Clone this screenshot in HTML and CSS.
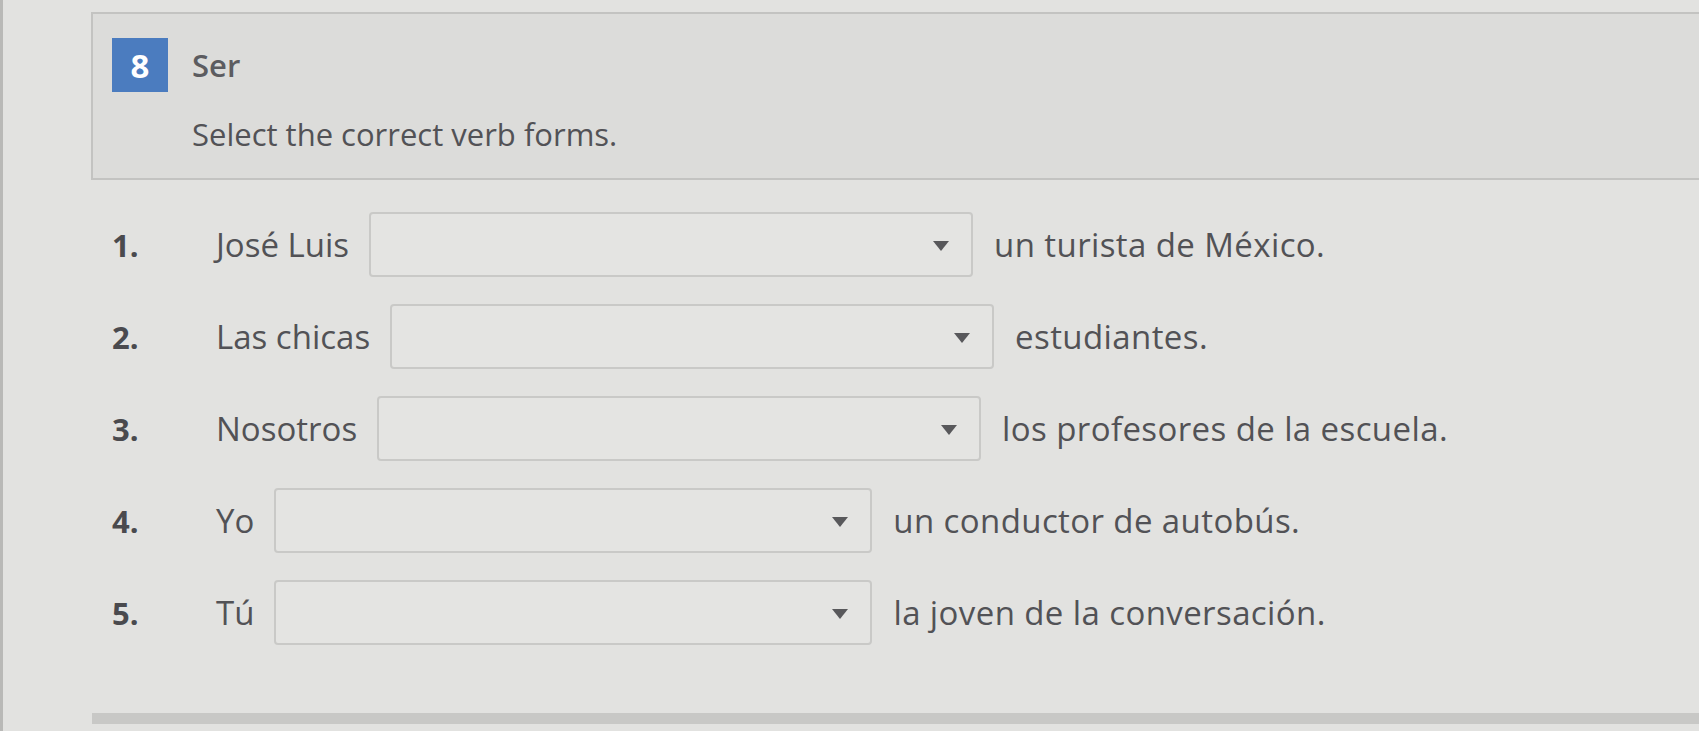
FILE: index.html
```html
<!DOCTYPE html>
<html lang="en">
<head>
    <meta charset="UTF-8">
    <meta name="viewport" content="width=device-width, initial-scale=1.0">
    <title>Ser</title>
    <link rel="stylesheet" href="styles.css">
</head>
<body>
    <div class="page">
        <!-- Question header -->
        <div class="question-header">
            <div class="title-row">
                <div class="badge">8</div>
                <h2 class="title">Ser</h2>
            </div>
            <p class="instruction">Select the correct verb forms.</p>
        </div>

        <!-- Items -->
        <ol class="items">
            <li class="item">
                <span class="num">1.</span>
                <span class="label">José Luis</span>
                <div class="dropdown wide"><span class="arrow"></span></div>
                <span class="rest">un turista de México.</span>
            </li>
            <li class="item">
                <span class="num">2.</span>
                <span class="label">Las chicas</span>
                <div class="dropdown wide"><span class="arrow"></span></div>
                <span class="rest">estudiantes.</span>
            </li>
            <li class="item">
                <span class="num">3.</span>
                <span class="label">Nosotros</span>
                <div class="dropdown wide"><span class="arrow"></span></div>
                <span class="rest">los profesores de la escuela.</span>
            </li>
            <li class="item">
                <span class="num">4.</span>
                <span class="label">Yo</span>
                <div class="dropdown"><span class="arrow"></span></div>
                <span class="rest">un conductor de autobús.</span>
            </li>
            <li class="item">
                <span class="num">5.</span>
                <span class="label">Tú</span>
                <div class="dropdown"><span class="arrow"></span></div>
                <span class="rest">la joven de la conversación.</span>
            </li>
        </ol>

        <div class="bottom-bar"></div>
    </div>
</body>
</html>
```

FILE: styles.css
```css
* {
    margin: 0;
    padding: 0;
    box-sizing: border-box;
    font-family: "Open Sans", "Noto Sans", sans-serif;
}

body {
    background-color: #e2e2e0;
    color: #525256;
    overflow: hidden;
    height: 731px;
}

.page {
    border-left: 3px solid #b9b9b7;
    height: 100%;
    padding-top: 12px;
}

/* Question header */
.question-header {
    margin: 0 -20px 0 88px;
    height: 168px;
    background-color: #dcdcda;
    border: 2px solid #c3c3c1;
    padding: 24px 0 0 19px;
}

.title-row {
    display: flex;
    align-items: center;
    gap: 24px;
}

.badge {
    width: 56px;
    height: 54px;
    background-color: #4b7cbf;
    color: #fff;
    font-size: 33px;
    font-weight: 700;
    display: flex;
    align-items: center;
    justify-content: center;
}

.title {
    font-size: 31px;
    font-weight: 600;
    color: #5c5c60;
}

.instruction {
    font-size: 31px;
    line-height: 40px;
    margin-top: 22px;
    margin-left: 80px;
}

/* Items */
.items {
    list-style: none;
    margin-top: 32px;
    padding-left: 109px;
}

.item {
    display: flex;
    align-items: center;
    height: 65px;
    margin-bottom: 27px;
    font-size: 33px;
}

.rest {
    letter-spacing: 0.4px;
}

.num {
    width: 104px;
    font-weight: 700;
    font-size: 31px;
    color: #4a4a4e;
}

.label {
    margin-right: 20px;
}

.dropdown {
    position: relative;
    width: 598px;
    height: 65px;
    border: 2px solid #c9c9c7;
    border-radius: 4px;
    background-color: #e4e4e2;
    margin-right: 21px;
}

.dropdown.wide {
    width: 604px;
}

.arrow {
    position: absolute;
    right: 22px;
    top: 27px;
    width: 0;
    height: 0;
    border-left: 8px solid transparent;
    border-right: 8px solid transparent;
    border-top: 10px solid #58585b;
}

.bottom-bar {
    margin: 68px 0 0 89px;
    height: 11px;
    background-color: #c8c8c6;
}
```
